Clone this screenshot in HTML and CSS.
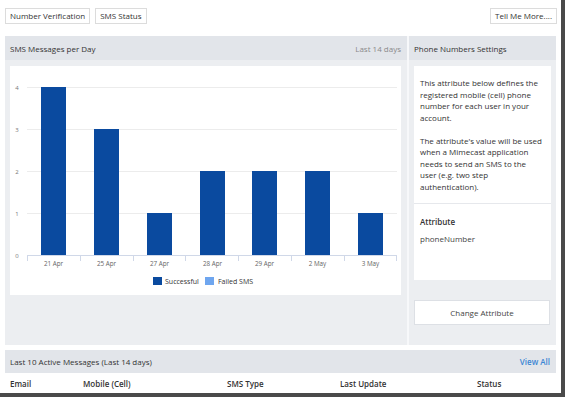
FILE: index.html
```html
<!DOCTYPE html>
<html>
<head>
<meta charset="utf-8">
<link rel="stylesheet" href="styles.css">
</head>
<body>
<div class="frame">
  <div class="toolbar">
    <div class="tabs">
      <span class="btn">Number Verification</span>
      <span class="btn">SMS Status</span>
    </div>
    <span class="btn">Tell Me More....</span>
  </div>

  <div class="main">
    <section class="col chart-col">
      <div class="head"><span>SMS Messages per Day</span><span class="muted">Last 14 days</span></div>
      <div class="body">
        <div class="card chart-card">
          <svg class="chart" width="391" height="229" viewBox="0 0 391 229">
            <g class="grid">
              <line x1="17" x2="387" y1="21.5" y2="21.5"/>
              <line x1="17" x2="387" y1="63.5" y2="63.5"/>
              <line x1="17" x2="387" y1="105.5" y2="105.5"/>
              <line x1="17" x2="387" y1="147.5" y2="147.5"/>
            </g>
            <g class="ylabels">
              <text x="7" y="23.5">4</text>
              <text x="7" y="65.5">3</text>
              <text x="7" y="107.5">2</text>
              <text x="7" y="149.5">1</text>
              <text x="7" y="191.5">0</text>
            </g>
            <g class="bars">
              <rect x="31" y="21" width="25" height="168"/>
              <rect x="84" y="63" width="25" height="126"/>
              <rect x="137" y="147" width="25" height="42"/>
              <rect x="190" y="105" width="25" height="84"/>
              <rect x="242" y="105" width="25" height="84"/>
              <rect x="295" y="105" width="25" height="84"/>
              <rect x="348" y="147" width="25" height="42"/>
            </g>
            <g class="axis">
              <line x1="17" x2="387" y1="189.5" y2="189.5"/>
              <line x1="17.5" x2="17.5" y1="189" y2="195"/>
              <line x1="70.5" x2="70.5" y1="189" y2="195"/>
              <line x1="123.5" x2="123.5" y1="189" y2="195"/>
              <line x1="175.5" x2="175.5" y1="189" y2="195"/>
              <line x1="228.5" x2="228.5" y1="189" y2="195"/>
              <line x1="281.5" x2="281.5" y1="189" y2="195"/>
              <line x1="334.5" x2="334.5" y1="189" y2="195"/>
              <line x1="386.5" x2="386.5" y1="189" y2="195"/>
            </g>
            <g class="xlabels">
              <text x="43.5" y="200">21 Apr</text>
              <text x="96.5" y="200">25 Apr</text>
              <text x="149.5" y="200">27 Apr</text>
              <text x="202.5" y="200">28 Apr</text>
              <text x="254.5" y="200">29 Apr</text>
              <text x="307.5" y="200">2 May</text>
              <text x="360.5" y="200">3 May</text>
            </g>
            <g class="legend">
              <rect class="sw-ok" x="143" y="211" width="9" height="8"/>
              <text x="155" y="218">Successful</text>
              <rect class="sw-fail" x="195" y="211" width="9" height="8"/>
              <text x="208" y="218">Failed SMS</text>
            </g>
          </svg>
        </div>
      </div>
    </section>

    <section class="col side-col">
      <div class="head"><span>Phone Numbers Settings</span></div>
      <div class="body">
        <div class="card info-card">
          <div class="info-text">
            <p>This attribute below defines the<br>registered mobile (cell) phone<br>number for each user in your<br>account.</p>
            <p>The attribute's value will be used<br>when a Mimecast application<br>needs to send an SMS to the<br>user (e.g. two step<br>authentication).</p>
          </div>
          <div class="attr">
            <div class="attr-label">Attribute</div>
            <div class="attr-value">phoneNumber</div>
          </div>
        </div>
        <div class="change-btn">Change Attribute</div>
      </div>
    </section>
  </div>

  <section class="messages">
    <div class="head"><span>Last 10 Active Messages (Last 14 days)</span><span class="link">View All</span></div>
    <div class="table-head">
      <span>Email</span>
      <span>Mobile (Cell)</span>
      <span>SMS Type</span>
      <span>Last Update</span>
      <span>Status</span>
    </div>
  </section>
</div>
</body>
</html>
```

FILE: styles.css
```css
* { box-sizing: border-box; }

html, body {
  margin: 0;
  padding: 0;
  background: #ffffff;
}

body {
  font-family: "Open Sans", "Liberation Sans", sans-serif;
  font-size: 8px;
  color: #333;
  width: 566px;
  height: 398px;
  overflow: hidden;
}

.frame {
  width: 565px;
  height: 397px;
  background: #fff;
  border-right: 4px solid #4a4a4a;
  border-bottom: 4px solid #4a4a4a;
  padding: 8px 4px 0 5px;
  display: flex;
  flex-direction: column;
}

.toolbar {
  display: flex;
  justify-content: space-between;
  align-items: center;
  height: 16px;
}

.tabs {
  display: flex;
  gap: 5px;
}

.btn {
  display: inline-flex;
  align-items: center;
  height: 16px;
  padding: 0 4px;
  border: 1px solid #dcdcdc;
  background: #fff;
  color: #333;
  font-size: 8px;
  line-height: 1;
}

.main {
  margin-top: 12px;
  margin-right: 1px;
  height: 309px;
  display: flex;
  gap: 2px;
  background: #f7f8fa;
}

.col {
  display: flex;
  flex-direction: column;
}

.chart-col { width: 402px; }
.side-col { width: 147px; }

.head {
  height: 24px;
  flex: none;
  background: #e2e5ea;
  display: flex;
  justify-content: space-between;
  align-items: center;
  padding: 0 6px 0 5px;
  color: #333;
}

.muted { color: #8a8a8a; }

.body {
  flex: 1;
  background: #eceef1;
  padding: 6px 5px;
}

.chart-col .body { padding: 6px 1px 6px 5px; }

.card { background: #fff; }

.chart-card {
  width: 391px;
  height: 229px;
}

.chart { display: block; font-family: "Open Sans", "Liberation Sans", sans-serif; }

.grid line { stroke: #ececec; stroke-width: 1; }
.axis line { stroke: #d0d8e8; stroke-width: 1; }

.ylabels text {
  font-size: 6px;
  fill: #777;
  text-anchor: middle;
}

.xlabels text {
  font-size: 6.3px;
  fill: #666;
  text-anchor: middle;
}

.bars rect { fill: #0a4a9f; }

.legend text { font-size: 7px; fill: #333; }
.sw-ok { fill: #0a4a9f; }
.sw-fail { fill: #6fa6ef; }

.info-card {
  height: 214px;
  display: flex;
  flex-direction: column;
}

.info-text {
  padding: 11px 0 0 6px;
  height: 138px;
  border-bottom: 1px solid #e6e8ec;
  line-height: 11.5px;
  font-size: 8px;
  white-space: nowrap;
  color: #333;
}

.info-text p { margin: 0 0 11.5px 0; }

.attr { padding: 12px 6px 0 6px; font-size: 8px; }
.attr-label { font-weight: 600; color: #333; }
.attr-value { margin-top: 6px; color: #444; }

.change-btn {
  margin-top: 20px;
  width: 136px;
  height: 25px;
  background: #fff;
  border: 1px solid #dde0e5;
  display: flex;
  align-items: center;
  justify-content: center;
  color: #444;
}

.messages {
  margin-top: 5px;
  margin-right: 1px;
  flex: 1;
  display: flex;
  flex-direction: column;
}

.messages .head { height: 23px; }

.link { color: #3b86d4; font-weight: 600; }

.table-head {
  flex: 1;
  display: grid;
  grid-template-columns: 73px 144px 113px 137px 1fr;
  align-items: center;
  padding-left: 5px;
  font-weight: 600;
  color: #333;
}
```
